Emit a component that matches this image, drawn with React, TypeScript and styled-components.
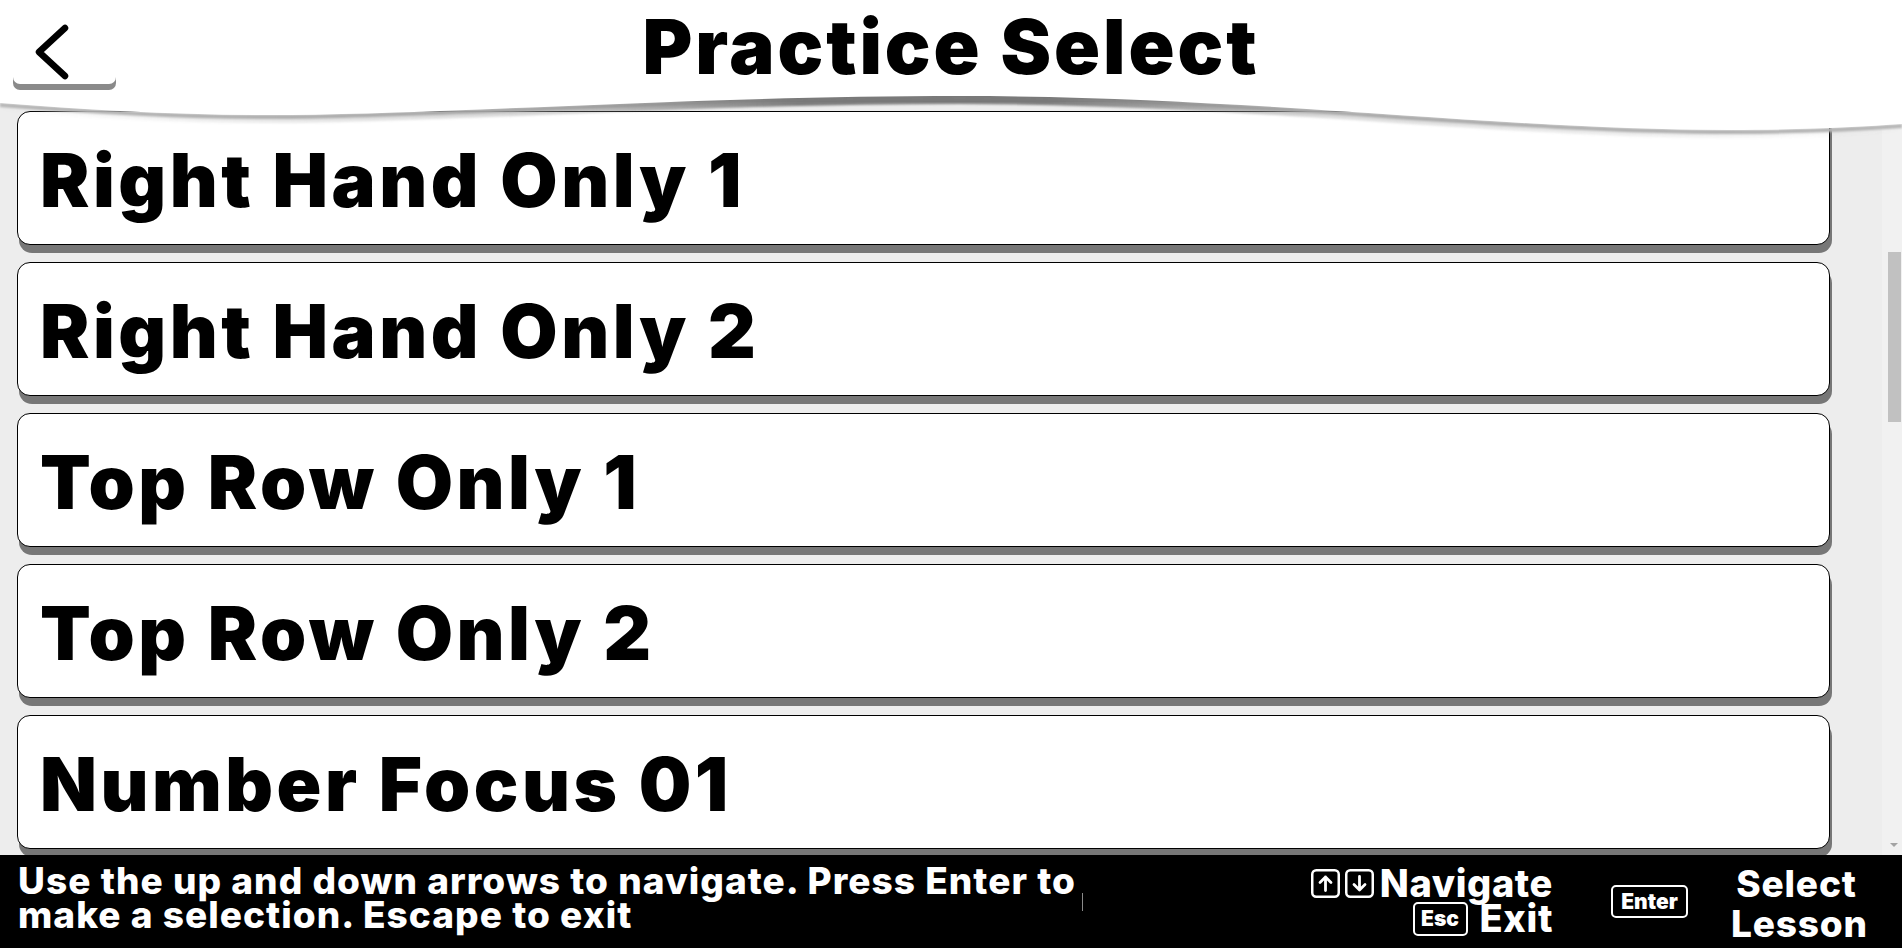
import React, { useLayoutEffect, useRef } from 'react';
import styled, { createGlobalStyle } from 'styled-components';

const FONT = `'Inter', 'Noto Sans', 'Liberation Sans', sans-serif`;

const GlobalStyle = createGlobalStyle`
  html, body {
    margin: 0;
    padding: 0;
    height: 100%;
    overflow: hidden;
    background: #000;
    font-family: ${FONT};
  }
  #root {
    height: 100%;
  }
`;

const Page = styled.div`
  position: relative;
  height: 100vh;
  display: flex;
  flex-direction: column;
`;

/* header sits over the scrolling list */
const Header = styled.header`
  position: absolute;
  top: 0;
  left: 0;
  right: 0;
  height: 140px;
  z-index: 2;
  pointer-events: none;
`;

const Wave = styled.svg`
  position: absolute;
  top: 0;
  left: 0;
  width: 100%;
  height: 140px;
`;

const TitleBar = styled.div`
  position: relative;
  display: flex;
  align-items: flex-start;
  padding-left: 13px;
  height: 90px;
`;

const BackButton = styled.button`
  pointer-events: auto;
  width: 103px;
  height: 84px;
  margin: 0;
  padding: 24px 0 0 22px;
  display: flex;
  align-items: flex-start;
  background: #fff;
  border: none;
  border-radius: 0 0 7px 7px;
  box-shadow: 0 6px 0 #8a8a8a, 0 1px 0 #bbb;
  cursor: pointer;
`;

const Title = styled.h1`
  position: absolute;
  left: 0;
  right: 0;
  top: 0;
  margin: 0;
  text-align: center;
  font-family: ${FONT};
  font-weight: 900;
  font-size: 76px;
  line-height: 92px;
  letter-spacing: 2.9px;
  color: #000;
`;

const ListArea = styled.div`
  flex: 1;
  min-height: 0;
  display: flex;
  background: #ededed;
`;

const List = styled.div`
  flex: 1;
  overflow: hidden;
  padding: 140px 52px 20px 17px;
  display: flex;
  flex-direction: column;
  gap: 17px;
`;

const ScrollTrack = styled.div`
  flex: none;
  width: 20px;
  background: #f1f1f1;
  display: flex;
  flex-direction: column;
  align-items: center;
`;

const ScrollThumb = styled.div`
  align-self: stretch;
  height: 170px;
  margin: 252px 1px 0 6px;
  background: #c1c1c1;
`;

const ScrollArrow = styled.div`
  margin: auto 0 8px 4px;
  width: 0;
  height: 0;
  border-left: 4px solid transparent;
  border-right: 4px solid transparent;
  border-top: 4px solid #a3a3a3;
`;

const Card = styled.button`
  flex: none;
  height: 134px;
  width: 100%;
  margin: 0;
  padding: 4px 0 0 22px;
  display: flex;
  align-items: center;
  text-align: left;
  background: #fff;
  border: 1.5px solid #000;
  border-radius: 13px;
  box-shadow: 2px 8px 0 #777;
  font-family: ${FONT};
  font-weight: 900;
  font-size: 74px;
  letter-spacing: 3.5px;
  color: #000;
  cursor: pointer;
`;

const Footer = styled.footer`
  flex: none;
  height: 93px;
  background: #000;
  color: #fff;
  display: flex;
  align-items: flex-start;
  padding-left: 18px;
  font-family: ${FONT};
  font-weight: 800;
  overflow: hidden;
`;

const HelpText = styled.p`
  margin: 0;
  padding-top: 9px;
  width: 1063px;
  font-size: 37px;
  line-height: 34px;
  letter-spacing: 1.05px;
  white-space: nowrap;
`;

const Caret = styled.span`
  align-self: center;
  width: 1px;
  height: 18px;
  margin-left: 1px;
  background: #8a8a8a;
`;

const Controls = styled.div`
  margin-left: auto;
  display: flex;
  align-items: center;
  height: 100%;
  padding-right: 40px;
`;

const HintColumn = styled.div`
  display: flex;
  flex-direction: column;
  align-items: flex-end;
  margin-top: -2px;
`;

const HintRow = styled.div<{ $gap: number }>`
  display: flex;
  align-items: center;
  gap: ${({ $gap }) => $gap}px;
  font-size: 38px;
  line-height: 35px;
  letter-spacing: 0.6px;
`;

const KeyIcons = styled.span`
  display: flex;
  gap: 5px;
`;

const KeyCap = styled.span<{ $w: number; $h: number }>`
  box-sizing: border-box;
  width: ${({ $w }) => $w}px;
  height: ${({ $h }) => $h}px;
  display: inline-flex;
  align-items: center;
  justify-content: center;
  border: 2.5px solid #fff;
  border-radius: 5px;
  font-size: 21px;
  font-weight: 900;
  letter-spacing: 0;
  line-height: 1;
`;

const EscKey = styled(KeyCap)`
  margin-top: 1px;
`;

const EnterKey = styled(KeyCap)`
  margin: 0 43px 0 58px;
`;

const ActionLabel = styled.div`
  width: 131px;
  text-align: center;
  font-size: 37px;
  line-height: 40px;
  letter-spacing: 0.8px;
  padding-top: 4px;
  white-space: nowrap;
`;

const ArrowKey = ({ down }: { down?: boolean }) => (
  <svg width="29" height="29" viewBox="0 0 29 29" fill="none">
    <rect x="1.25" y="1.25" width="26.5" height="26.5" rx="4" stroke="#fff" strokeWidth="2.5" />
    <g stroke="#fff" strokeWidth="2.8" strokeLinecap="round" strokeLinejoin="round">
      {down ? (
        <path d="M14.5 7.5 V21 M9 15.5 L14.5 21 L20 15.5" />
      ) : (
        <path d="M14.5 21.5 V8 M9 13.5 L14.5 8 L20 13.5" />
      )}
    </g>
  </svg>
);

const EDGE =
  'M0 103 C90 110 190 116 290 115 C470 113 700 96 960 96 C1250 96 1500 130 1730 130 C1800 130 1860 127 1902 124';

const lessons = [
  'Home Row Only 1',
  'Home Row Only 2',
  'Bottom Row Only 1',
  'Bottom Row Only 2',
  'Left Hand Only 1',
  'Left Hand Only 2',
  'Both Hands 1',
  'Both Hands 2',
  'Right Hand Only 1',
  'Right Hand Only 2',
  'Top Row Only 1',
  'Top Row Only 2',
  'Number Focus 01',
  'Number Focus 02',
  'Number Focus 03',
  'Symbol Focus 01',
  'Symbol Focus 02',
  'Symbol Focus 03',
  'Capital Letters 1',
  'Capital Letters 2',
  'Common Words 1',
  'Common Words 2',
  'Common Words 3',
  'Punctuation 1',
  'Punctuation 2',
  'Speed Drill 1',
  'Speed Drill 2',
];

const App = () => {
  const listRef = useRef<HTMLDivElement>(null);

  useLayoutEffect(() => {
    // keep "Right Hand Only 1" just under the header
    if (listRef.current) listRef.current.scrollTop = 1237;
  }, []);

  return (
    <Page>
      <GlobalStyle />
      <Header>
        <Wave viewBox="0 0 1902 140" preserveAspectRatio="none">
          <defs>
            <linearGradient id="edgeShade" x1="0" x2="1902" y1="0" y2="0" gradientUnits="userSpaceOnUse">
              <stop offset="0" stopColor="#8a8a8a" stopOpacity="0" />
              <stop offset="0.3" stopColor="#808080" stopOpacity="0.35" />
              <stop offset="0.42" stopColor="#777" stopOpacity="0.95" />
              <stop offset="0.55" stopColor="#777" stopOpacity="0.95" />
              <stop offset="0.7" stopColor="#8a8a8a" stopOpacity="0.3" />
              <stop offset="1" stopColor="#8a8a8a" stopOpacity="0" />
            </linearGradient>
            <filter id="soft" x="-5%" y="-50%" width="110%" height="200%">
              <feGaussianBlur stdDeviation="0.8" />
            </filter>
          </defs>
          <g filter="url(#soft)">
            <path d={EDGE} transform="translate(0 2)" stroke="#b5b5b5" strokeWidth="4" fill="none" />
            <path d={EDGE} transform="translate(0 3)" stroke="url(#edgeShade)" strokeWidth="10" fill="none" />
          </g>
          <path d={`${EDGE} V0 H0 Z`} fill="#fff" />
        </Wave>
        <TitleBar>
          <BackButton aria-label="Back">
            <svg width="34" height="56" viewBox="0 0 34 56" fill="none">
              <path
                d="M30 4 L4 28 L30 52"
                stroke="#000"
                strokeWidth="6.5"
                strokeLinecap="round"
                strokeLinejoin="round"
              />
            </svg>
          </BackButton>
          <Title>Practice Select</Title>
        </TitleBar>
      </Header>

      <ListArea>
        <List ref={listRef}>
          {lessons.map((name) => (
            <Card key={name}>{name}</Card>
          ))}
        </List>
        <ScrollTrack>
          <ScrollThumb />
          <ScrollArrow />
        </ScrollTrack>
      </ListArea>

      <Footer>
        <HelpText>
          Use the up and down arrows to navigate. Press Enter to
          <br />
          make a selection. Escape to exit
        </HelpText>
        <Caret />
        <Controls>
          <HintColumn>
            <HintRow $gap={6}>
              <KeyIcons>
                <ArrowKey />
                <ArrowKey down />
              </KeyIcons>
              Navigate
            </HintRow>
            <HintRow $gap={12}>
              <EscKey $w={55} $h={34}>Esc</EscKey>
              Exit
            </HintRow>
          </HintColumn>
          <EnterKey $w={77} $h={33}>Enter</EnterKey>
          <ActionLabel>
            Select
            <br />
            Lesson
          </ActionLabel>
        </Controls>
      </Footer>
    </Page>
  );
};

export default App;
